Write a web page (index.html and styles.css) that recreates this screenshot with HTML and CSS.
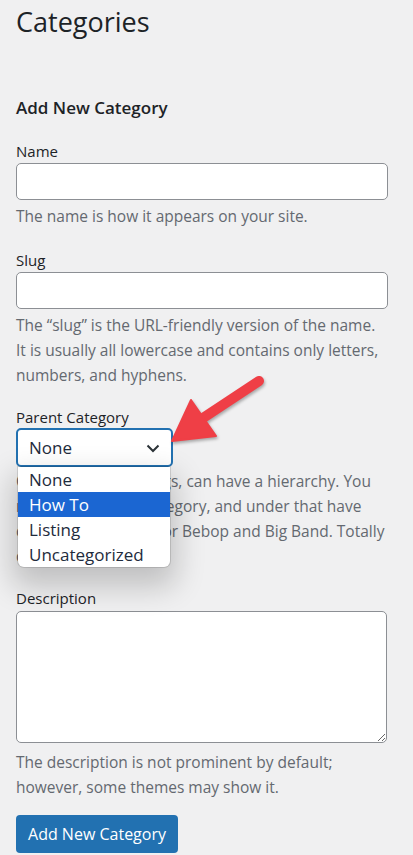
FILE: index.html
```html
<!DOCTYPE html>
<html lang="en">
<head>
<meta charset="utf-8">
<title>Categories</title>
<link rel="stylesheet" href="styles.css">
</head>
<body>
<div class="page">
  <h1 class="title">Categories</h1>
  <h2 class="subtitle">Add New Category</h2>

  <div class="field field-name">
    <label class="label">Name</label>
    <input class="text-input" type="text">
    <p class="help">The name is how it appears on your site.</p>
  </div>

  <div class="field field-slug">
    <label class="label">Slug</label>
    <input class="text-input" type="text">
    <p class="help">The “slug” is the URL-friendly version of the name. It is usually all lowercase and contains only letters, numbers, and hyphens.</p>
  </div>

  <div class="field field-parent">
    <label class="label">Parent Category</label>
    <div class="select-wrap">
      <div class="select">
        <span>None</span>
        <svg class="chevron" width="14" height="9" viewBox="0 0 14 9"><path d="M1.5 1.5 L7 7 L12.5 1.5" fill="none" stroke="#2c3338" stroke-width="2"/></svg>
      </div>
      <ul class="dropdown">
        <li class="option">None</li>
        <li class="option selected">How To</li>
        <li class="option">Listing</li>
        <li class="option">Uncategorized</li>
      </ul>
    </div>
    <p class="help help-parent">Categories, unlike tags, can have a hierarchy. You might have a Jazz category, and under that have children categories for Bebop and Big Band. Totally optional.</p>
  </div>

  <div class="field field-desc">
    <label class="label">Description</label>
    <textarea class="textarea"></textarea>
    <p class="help help-desc">The description is not prominent by default; however, some themes may show it.</p>
  </div>

  <button class="button" type="button">Add New Category</button>

  <svg class="arrow" width="120" height="90" viewBox="158 362 120 90">
    <line x1="259" y1="381" x2="200" y2="420" stroke="#ef3f46" stroke-width="10" stroke-linecap="round"/>
    <polygon points="172,441 191,400 216,436" fill="#ef3f46" stroke="#ef3f46" stroke-width="2" stroke-linejoin="round"/>
  </svg>
</div>
</body>
</html>
```

FILE: styles.css
```css
html, body {
  margin: 0;
  padding: 0;
  background: #f0f0f1;
}

body {
  font-family: "Open Sans", "Noto Sans", "Liberation Sans", sans-serif;
  color: #1d2327;
}

.page {
  position: relative;
  padding: 4px 25px 2px 16px;
  height: 849px;
  overflow: hidden;
}

.title {
  margin: 0;
  font-size: 27px;
  font-weight: 400;
  line-height: 36px;
  color: #1d2327;
}

.subtitle {
  margin: 56px 0 0;
  font-size: 17px;
  font-weight: 600;
  line-height: 24px;
  color: #1d2327;
}

.field {
  margin-top: 21px;
}

.label {
  display: block;
  font-size: 15px;
  line-height: 20px;
  color: #1d2327;
  margin-bottom: 2px;
}

.text-input {
  display: block;
  box-sizing: border-box;
  width: 372px;
  height: 37px;
  margin: 0;
  border: 1px solid #8c8f94;
  border-radius: 5px;
  background: #fff;
}

.help {
  margin: 4px 0 0;
  font-size: 15.5px;
  line-height: 25px;
  color: #646970;
}

.field-parent {
  margin-top: 19px;
}

.field-parent .label {
  margin-bottom: 1px;
}

.select-wrap {
  position: relative;
  width: 157px;
}

.select {
  box-sizing: border-box;
  height: 39px;
  border: 2px solid #2271b1;
  border-radius: 5px;
  background: #fff;
  display: flex;
  align-items: center;
  justify-content: space-between;
  padding: 0 11px 0 11px;
  font-size: 17px;
  color: #1e2b3c;
}

.chevron {
  display: block;
  margin-top: 1px;
}

.dropdown {
  position: absolute;
  left: 2px;
  top: 39px;
  width: 152px;
  margin: 0;
  padding: 0;
  list-style: none;
  background: #fff;
  border-radius: 0 0 6px 6px;
  box-shadow: 0 0 0 1px rgba(0, 0, 0, 0.12), 0 14px 30px 6px rgba(0, 0, 0, 0.2);
  overflow: hidden;
  z-index: 2;
}

.option {
  height: 25px;
  line-height: 25px;
  padding-left: 11px;
  font-size: 17px;
  color: #1e2b3c;
}

.option.selected {
  background: #1b66d2;
  color: #fff;
}

.help-parent {
  margin-top: 2px;
}

.field-desc {
  margin-top: 19px;
}

.field-desc .label {
  margin-bottom: 3px;
}

.textarea {
  display: block;
  box-sizing: border-box;
  width: 371px;
  height: 132px;
  margin: 0;
  border: 1px solid #8c8f94;
  border-radius: 5px;
  background: #fff;
}

.help-desc {
  margin-top: 7px;
}

.button {
  display: block;
  margin-top: 15px;
  height: 38px;
  width: 162px;
  padding: 0;
  border: 0;
  border-radius: 4px;
  background: #2271b1;
  color: #fff;
  font-family: "Open Sans", "Noto Sans", sans-serif;
  font-size: 16px;
  text-align: center;
}

.arrow {
  position: absolute;
  left: 158px;
  top: 362px;
  z-index: 3;
  filter: drop-shadow(1px 2px 1.5px rgba(0, 0, 0, 0.3));
}
```
